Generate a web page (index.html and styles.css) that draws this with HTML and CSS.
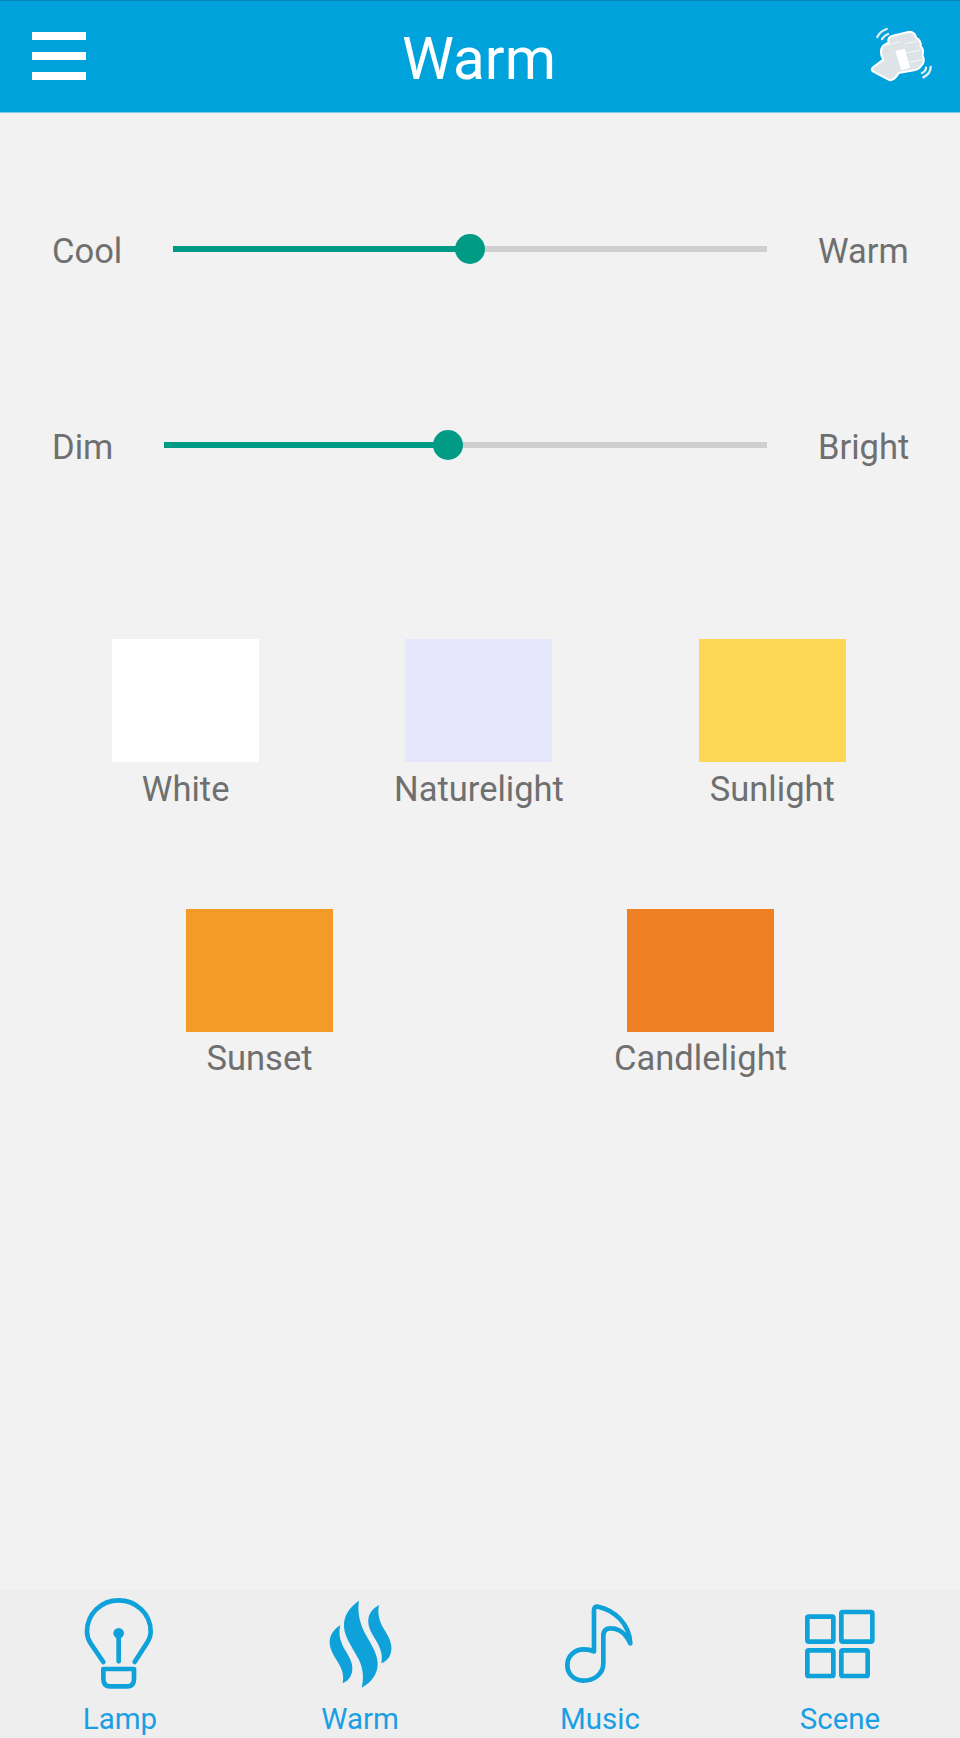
FILE: index.html
```html
<!DOCTYPE html>
<html lang="en">
<head>
<meta charset="utf-8">
<title>Warm</title>
<link rel="stylesheet" href="styles.css">
</head>
<body>
<div class="app">
  <header class="header">
    <div class="menu"><span></span><span></span><span></span></div>
    <h1 class="title">Warm</h1>
    <svg class="shake" viewBox="0 0 360 270">
      <g fill="none" stroke="#e6edf1" stroke-width="7" stroke-linecap="round">
        <path d="M112 78C118 66 128 58 140 54"/>
        <path d="M126 84C130 78 136 72 144 69"/>
        <path d="M272 168C272 180 264 192 250 199"/>
        <path d="M258 170C258 176 254 182 246 186"/>
      </g>
      <path class="shake-hand" d="M98 170L130 146C120 130 120 112 132 102L146 94C142 84 148 76 158 74L208 62C220 62 226 68 228 80C238 84 244 96 242 106C250 112 250 124 248 134C254 144 252 158 244 164C240 172 232 176 222 178L176 186C170 198 160 206 150 208L100 182C94 178 94 174 98 170Z"/>
      <g fill="none" stroke="#f4f7f8" stroke-width="3" stroke-linecap="round">
        <path d="M196 98L230 91"/>
        <path d="M200 126L240 118"/>
        <path d="M206 154L246 146"/>
        <path d="M134 104L176 93"/>
      </g>
      <path d="M166 120L194 113L210 170L184 178Z" fill="#fff"/>
    </svg>
  </header>

  <main class="main">
    <div class="slider-row slider-row-first">
      <span class="end-label">Cool</span>
      <div class="slider">
        <div class="slider-fill" style="width:50%"></div>
        <div class="slider-thumb" style="left:50%"></div>
      </div>
      <span class="end-label end-label-right">Warm</span>
    </div>
    <div class="slider-row slider-row-second">
      <span class="end-label">Dim</span>
      <div class="slider">
        <div class="slider-fill" style="width:47.1%"></div>
        <div class="slider-thumb" style="left:47.1%"></div>
      </div>
      <span class="end-label end-label-right">Bright</span>
    </div>

    <div class="presets presets-three">
      <div class="preset"><div class="swatch swatch-white"></div><div class="preset-name">White</div></div>
      <div class="preset"><div class="swatch swatch-nature"></div><div class="preset-name">Naturelight</div></div>
      <div class="preset"><div class="swatch swatch-sun"></div><div class="preset-name">Sunlight</div></div>
    </div>
    <div class="presets presets-two">
      <div class="preset"><div class="swatch swatch-sunset"></div><div class="preset-name">Sunset</div></div>
      <div class="preset"><div class="swatch swatch-candle"></div><div class="preset-name">Candlelight</div></div>
    </div>
  </main>

  <nav class="tabs">
    <div class="tab">
      <svg class="tab-icon" viewBox="210 30 300 300">
        <g fill="none" stroke="#0ea1da" stroke-width="14" stroke-linecap="round" stroke-linejoin="round">
          <path d="M310 246L272 190C264 178 261 166 261 155C261 100 305 61 356 61C407 61 452 100 452 155C452 166 448 178 440 190L404 246"/>
          <path d="M310 267H402V295C402 310 396 319 384 319H328C316 319 310 310 310 295Z"/>
          <path d="M356 165V244"/>
        </g>
        <circle cx="356" cy="160" r="16" fill="#0ea1da"/>
      </svg>
      <span class="tab-label">Lamp</span>
    </div>
    <div class="tab">
      <svg class="tab-icon" viewBox="930 30 300 300">
        <g fill="#0ea1da">
          <path d="M1077 62C1048 82 1030 108 1032 140C1034 172 1056 200 1076 238C1090 266 1092 296 1085 323C1114 308 1134 282 1133 250C1132 214 1106 184 1090 150C1078 122 1072 92 1077 62Z"/>
          <path d="M1021 136C998 150 988 170 989 190C991 214 1006 234 1018 254C1028 272 1032 290 1028 310C1048 302 1058 284 1057 262C1056 236 1036 216 1026 192C1018 174 1016 154 1021 136Z"/>
          <path d="M1137 75C1114 88 1103 106 1105 128C1107 152 1124 172 1134 192C1144 212 1148 230 1144 250C1166 242 1176 222 1174 198C1172 172 1152 152 1142 128C1135 110 1133 92 1137 75Z"/>
        </g>
      </svg>
      <span class="tab-label">Warm</span>
    </div>
    <div class="tab">
      <svg class="tab-icon" viewBox="210 30 300 300">
        <path fill="none" stroke="#0ea1da" stroke-width="14" stroke-linecap="round" stroke-linejoin="round" d="M342 212V90C342 82 346 79 354 80C402 90 448 130 451 190C436 160 420 146 394 145C378 144 370 152 370 168V250C370 284 340 302 310 302C282 302 262 282 262 255C262 228 285 208 310 208C322 208 334 210 342 214"/>
      </svg>
      <span class="tab-label">Music</span>
    </div>
    <div class="tab">
      <svg class="tab-icon" viewBox="930 30 300 300">
        <g fill="none" stroke="#0ea1da" stroke-width="14" stroke-linejoin="round">
          <rect x="982" y="110" width="78" height="75" rx="4"/>
          <rect x="1084" y="96" width="93" height="89" rx="4"/>
          <rect x="982" y="211" width="78" height="77" rx="4"/>
          <rect x="1084" y="211" width="79" height="77" rx="4"/>
        </g>
      </svg>
      <span class="tab-label">Scene</span>
    </div>
  </nav>
</div>
</body>
</html>
```

FILE: styles.css
```css
* { box-sizing: border-box; }

html, body {
  margin: 0;
  padding: 0;
}

body {
  font-family: Roboto, "Liberation Sans", sans-serif;
  background: #f2f2f2;
}

.app {
  display: flex;
  flex-direction: column;
  width: 960px;
  height: 1738px;
  overflow: hidden;
}

.header {
  display: grid;
  grid-template-columns: 1fr auto 1fr;
  align-items: center;
  height: 113px;
  flex: none;
  background: #00a2db;
  border-top: 1px solid #0b86b4;
  border-bottom: 1px solid #7fcdea;
}

.menu {
  display: flex;
  flex-direction: column;
  gap: 12px;
  width: 54px;
  margin: -1px 0 0 32px;
}

.menu span {
  display: block;
  height: 8px;
  background: #fff;
}

.title {
  margin: 5px 2px 0 0;
  color: #fff;
  font-size: 58.5px;
  font-weight: 400;
  line-height: 1;
  letter-spacing: 0;
}

.shake {
  justify-self: end;
  width: 120px;
  height: 90px;
  margin-top: -2px;
}

.shake-hand {
  fill: #dde4e8;
  stroke: #fff;
  stroke-width: 6;
  stroke-linejoin: round;
}

.main {
  flex: 1;
  padding-top: 116px;
}

.slider-row {
  display: flex;
  align-items: center;
  height: 40px;
  padding: 0 52px;
}

.slider-row-second {
  margin-top: 156px;
}

.end-label {
  flex: none;
  padding-top: 4px;
  color: #6f6f6f;
  font-size: 34.5px;
  line-height: 40px;
}

.slider-row-second .end-label {
  padding-top: 3px;
}

.end-label-right {
  width: 90px;
  margin-left: 51px;
  text-align: right;
  white-space: nowrap;
}

.slider {
  position: relative;
  flex: 1;
  height: 6px;
  margin-left: 51px;
  background: #cfcfcf;
}

.slider-fill {
  height: 100%;
  background: #009b85;
}

.slider-thumb {
  position: absolute;
  top: 50%;
  width: 30px;
  height: 30px;
  border-radius: 50%;
  background: #009b85;
  transform: translate(-50%, -50%);
}

.presets {
  display: flex;
  padding: 0 41px 0 39px;
}

.presets-three {
  margin-top: 174px;
}

.presets-two {
  margin-top: 100px;
  padding: 0 39px;
}

.preset {
  flex: 1;
  display: flex;
  flex-direction: column;
  align-items: center;
}

.swatch {
  width: 147px;
  height: 123px;
}

.swatch-white { background: #ffffff; }
.swatch-nature { background: #e6e6fc; }
.swatch-sun { background: #fed755; }
.swatch-sunset { background: #f39b27; }
.swatch-candle { background: #ef8024; }

.preset-name {
  margin-top: 7px;
  color: #6f6f6f;
  font-size: 34.5px;
  line-height: 40px;
  white-space: nowrap;
}

.presets-two .preset-name {
  margin-top: 6px;
}

.tabs {
  display: grid;
  grid-template-columns: repeat(4, 1fr);
  flex: none;
  height: 148px;
  background: #eeeeee;
}

.tab {
  display: flex;
  flex-direction: column;
  align-items: center;
}

.tab-icon {
  display: block;
  width: 100px;
  height: 100px;
}

.tab-label {
  margin-top: 12px;
  color: #1a9fe3;
  font-size: 29.5px;
  line-height: 34px;
}
```
